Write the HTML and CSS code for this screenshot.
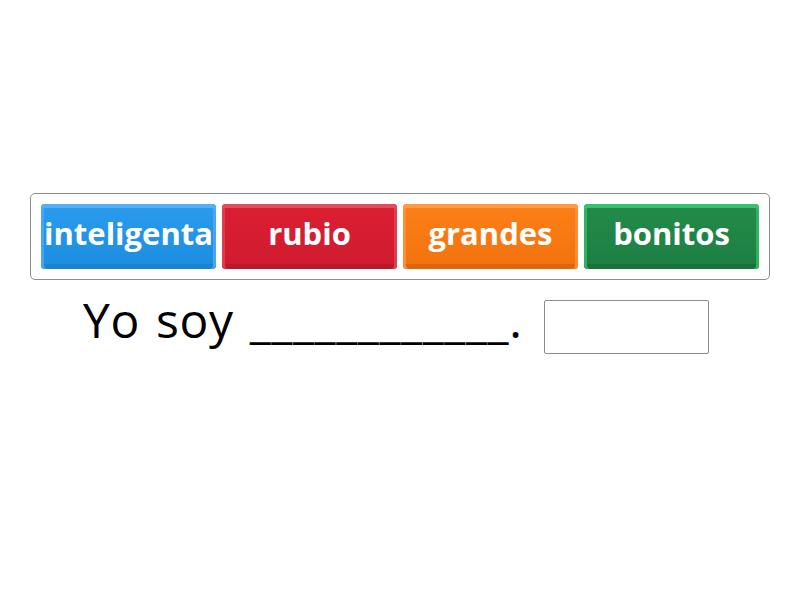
FILE: index.html
```html
<!DOCTYPE html>
<html lang="es">
<head>
    <meta charset="UTF-8">
    <meta name="viewport" content="width=device-width, initial-scale=1.0">
    <title>Completa la frase</title>
    <link rel="stylesheet" href="styles.css">
</head>
<body>
    <div class="opciones">
        <div class="tarjeta azul">inteligenta</div>
        <div class="tarjeta rojo">rubio</div>
        <div class="tarjeta naranja">grandes</div>
        <div class="tarjeta verde">bonitos</div>
    </div>
    <div class="frase">
        <span class="texto">Yo soy ____________.</span>
        <div class="hueco"></div>
    </div>
</body>
</html>
```

FILE: styles.css
```css
body {
    margin: 0;
    background: white;
    font-family: "Open Sans", "DejaVu Sans", sans-serif;
}
.opciones {
    display: flex;
    gap: 6px;
    width: 718px;
    margin: 193px 0 0 30px;
    padding: 10px;
    border: 1px solid #8c8c8c;
    border-radius: 5px;
}
.tarjeta {
    width: 175px;
    height: 65px;
    box-sizing: border-box;
    border-radius: 4px;
    display: flex;
    align-items: center;
    justify-content: center;
    color: white;
    font-weight: bold;
    font-size: 31px;
    padding-bottom: 8px;
}
/* borde claro arriba y a los lados, más oscuro abajo */
.azul {
    background: linear-gradient(#2b9bee, #1b8ddf);
    box-shadow: inset 0 4px 0 #55b0f2, inset 3px 0 0 #46a6ef, inset -3px 0 0 #46a6ef, inset 0 -5px 0 #1a82cf;
}
.rojo {
    background: linear-gradient(#dc1f33, #cf1b2e);
    box-shadow: inset 0 4px 0 #e24b5a, inset 3px 0 0 #df3c4c, inset -3px 0 0 #df3c4c, inset 0 -5px 0 #b8192a;
}
.naranja {
    background: linear-gradient(#fd7f17, #f2730e);
    box-shadow: inset 0 4px 0 #ff9a45, inset 3px 0 0 #fe8d33, inset -3px 0 0 #fe8d33, inset 0 -5px 0 #dd660a;
}
.verde {
    background: linear-gradient(#228b4a, #1d7f42);
    box-shadow: inset 0 4px 0 #35c46d, inset 3px 0 0 #2fb362, inset -3px 0 0 #2fb362, inset 0 -5px 0 #1a713b;
}
.frase {
    display: flex;
    align-items: flex-start;
    gap: 22px;
    margin-top: 7px;
    padding-left: 83px;
}
.texto {
    font-size: 48px;
    letter-spacing: 0.6px;
    word-spacing: 3px;
    color: black;
}
.hueco {
    width: 163px;
    height: 52px;
    margin-top: 13px;
    border: 1px solid #8c8c8c;
    border-radius: 2px;
}
```
